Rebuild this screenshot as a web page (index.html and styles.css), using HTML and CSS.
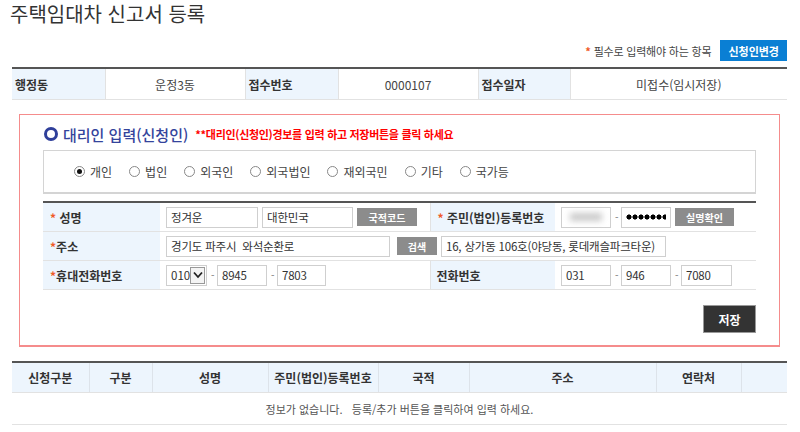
FILE: index.html
```html
<!DOCTYPE html>
<html lang="ko">
<head>
  <meta charset="UTF-8">
  <meta name="viewport" content="width=device-width, initial-scale=1.0">
  <title>주택임대차 신고서 등록</title>
  <link rel="stylesheet" href="styles.css">
</head>
<body>
  <div class="page">
    <h1 class="title">주택임대차 신고서 등록</h1>

    <div class="toolbar">
      <span class="req-note"><span class="star">*</span> 필수로 입력해야 하는 항목</span>
      <button class="blue-btn">신청인변경</button>
    </div>

    <table class="info-table">
      <colgroup>
        <col style="width:93px"><col style="width:140px">
        <col style="width:93px"><col style="width:140px">
        <col style="width:92px"><col>
      </colgroup>
      <tr>
        <th>행정동</th>
        <td>운정3동</td>
        <th>접수번호</th>
        <td>0000107</td>
        <th>접수일자</th>
        <td>미접수(임시저장)</td>
      </tr>
    </table>

    <div class="agent-box">
      <div class="agent-head">
        <span class="ring"></span>
        <span class="agent-title">대리인 입력(신청인)</span>
        <span class="agent-warn">**대리인(신청인)경보를 입력 하고 저장버튼을 클릭 하세요</span>
      </div>

      <div class="radio-box">
        <label class="radio"><span class="dot checked"></span>개인</label>
        <label class="radio"><span class="dot"></span>법인</label>
        <label class="radio"><span class="dot"></span>외국인</label>
        <label class="radio"><span class="dot"></span>외국법인</label>
        <label class="radio"><span class="dot"></span>재외국민</label>
        <label class="radio"><span class="dot"></span>기타</label>
        <label class="radio"><span class="dot"></span>국가등</label>
      </div>

      <table class="form-table">
        <colgroup>
          <col style="width:117px"><col style="width:270px">
          <col style="width:125px"><col>
        </colgroup>
        <tr>
          <th><span class="star">*</span> 성명</th>
          <td>
            <div class="fields">
              <input class="inp w92" value="정겨운">
              <input class="inp w91" value="대한민국">
              <button class="gray-btn w60">국적코드</button>
            </div>
          </td>
          <th><span class="star">*</span> 주민(법인)등록번호</th>
          <td>
            <div class="fields">
              <span class="inp w50 blurred"><span class="blur"></span></span>
              <span class="dash">-</span>
              <span class="inp w50 pw"><span class="dots"></span></span>
              <button class="gray-btn w59">실명확인</button>
            </div>
          </td>
        </tr>
        <tr>
          <th><span class="star">*</span>주소</th>
          <td colspan="3">
            <div class="fields">
              <input class="inp w224" value="경기도 파주시  와석순환로">
              <button class="gray-btn w40 ml3">검색</button>
              <input class="inp w225" value="16, 상가동 106호(야당동, 롯데캐슬파크타운)">
            </div>
          </td>
        </tr>
        <tr>
          <th><span class="star">*</span>휴대전화번호</th>
          <td>
            <div class="fields">
              <span class="select">010<span class="arrow"><svg viewBox="0 0 10 8" width="10" height="8"><path d="M1 1.5 L5 6 L9 1.5" fill="none" stroke="#222" stroke-width="1.8"/></svg></span></span>
              <span class="dash">-</span>
              <input class="inp w50" value="8945">
              <span class="dash">-</span>
              <input class="inp w49" value="7803">
            </div>
          </td>
          <th class="plain">전화번호</th>
          <td>
            <div class="fields">
              <input class="inp w50" value="031">
              <span class="dash">-</span>
              <input class="inp w50" value="946">
              <span class="dash">-</span>
              <input class="inp w51" value="7080">
            </div>
          </td>
        </tr>
      </table>

      <div class="save-row">
        <button class="dark-btn">저장</button>
      </div>
    </div>

    <table class="list-table">
      <colgroup>
        <col style="width:77px"><col style="width:63px"><col style="width:116px">
        <col style="width:110px"><col style="width:91px"><col style="width:187px">
        <col style="width:85px"><col>
      </colgroup>
      <tr>
        <th>신청구분</th>
        <th>구분</th>
        <th>성명</th>
        <th>주민(법인)등록번호</th>
        <th>국적</th>
        <th>주소</th>
        <th>연락처</th>
        <th></th>
      </tr>
      <tr>
        <td colspan="8" class="empty">정보가 없습니다.&nbsp;&nbsp; 등록/추가 버튼을 클릭하여 입력 하세요.</td>
      </tr>
    </table>
  </div>
</body>
</html>
```

FILE: styles.css
```css
body {
  margin: 0;
  background: #fff;
  color: #333;
  font-family: "Malgun Gothic", "Noto Sans CJK KR", "Noto Sans", sans-serif;
  font-size: 12px;
}
.page {
  width: 775px;
  padding: 0 13px 0 12px;
}
.title {
  margin: 0 0 0 -2px;
  font-size: 20px;
  font-weight: 400;
  line-height: 28px;
  color: #333;
}
.toolbar {
  display: flex;
  justify-content: flex-end;
  align-items: center;
  gap: 9px;
  margin-top: 12px;
}
.req-note {
  font-size: 11px;
  color: #444;
  letter-spacing: -0.2px;
}
.star {
  color: #f05a28;
  font-weight: 700;
}
.blue-btn {
  height: 21px;
  padding: 0 8px;
  border: none;
  background: #0a7fd4;
  color: #fff;
  font-family: inherit;
  font-size: 11px;
  font-weight: 700;
}
.info-table,
.form-table,
.list-table {
  width: 100%;
  border-collapse: collapse;
  table-layout: fixed;
  border-top: 2px solid #555;
}
.info-table {
  margin-top: 6px;
}
.info-table th,
.info-table td {
  height: 30px;
  padding: 0;
  border: 1px solid #e2e2e2;
  border-top: none;
  font-size: 12px;
}
.info-table tr > :first-child { border-left: none; }
.info-table tr > :last-child { border-right: none; }
.info-table th {
  background: #edf5fd;
  text-align: left;
  padding-left: 3px;
  font-weight: 700;
  color: #333;
}
.info-table td {
  text-align: center;
  color: #444;
}
.agent-box {
  margin: 14px 7px 0 7px;
  padding: 9px 23px 12px 23px;
  border: 1px solid #f58c8c;
  border-bottom-width: 2px;
}
.agent-head {
  display: flex;
  align-items: center;
  height: 20px;
}
.ring {
  width: 8px;
  height: 8px;
  border: 3px solid #2f3f9a;
  border-radius: 50%;
  margin: 0 5px 0 1px;
}
.agent-title {
  font-size: 15px;
  color: #34449c;
  font-weight: 500;
}
.agent-warn {
  margin-left: 7px;
  font-size: 11px;
  font-weight: 700;
  color: #f00;
  letter-spacing: -0.3px;
}
.radio-box {
  display: flex;
  align-items: center;
  height: 41px;
  margin-top: 6px;
  padding-left: 30px;
  border: 1px solid #d4d4d4;
  border-bottom-width: 2px;
}
.radio {
  display: flex;
  align-items: center;
  margin-right: 17px;
  font-size: 12px;
  color: #444;
}
.dot {
  box-sizing: border-box;
  width: 11px;
  height: 11px;
  margin-right: 5px;
  border: 1px solid #888;
  border-radius: 50%;
  background: #fff;
  position: relative;
}
.dot.checked::after {
  content: "";
  position: absolute;
  left: 2px;
  top: 2px;
  width: 5px;
  height: 5px;
  border-radius: 50%;
  background: #111;
}
.form-table {
  margin-top: 7px;
}
.form-table th,
.form-table td {
  height: 28px;
  padding: 0;
  border-bottom: 1px solid #e2e2e2;
}
.form-table th {
  background: #edf5fd;
  text-align: left;
  padding-left: 7px;
  font-size: 12px;
  font-weight: 700;
  color: #333;
}
.form-table th.plain {
  padding-left: 6px;
}
.form-table td {
  padding-left: 6px;
}
.form-table td + th {
  border-left: 1px solid #e2e2e2;
}
.fields {
  display: flex;
  align-items: center;
  gap: 4px;
}
.inp {
  box-sizing: border-box;
  height: 21px;
  padding: 0 4px;
  border: 1px solid #cfcfcf;
  font-family: inherit;
  font-size: 11.5px;
  letter-spacing: -0.2px;
  color: #333;
  background: #fff;
}
.w40 { width: 40px; }
.w49 { width: 49px; }
.w50 { width: 50px; }
.w51 { width: 51px; }
.w59 { width: 59px; }
.w60 { width: 60px; }
.w91 { width: 91px; }
.w92 { width: 92px; }
.w224 { width: 224px; }
.w225 { width: 225px; }
.ml3 { margin-left: 3px; }
.pw,
.blurred {
  display: flex;
  align-items: center;
  justify-content: center;
}
.dots {
  width: 42px;
  height: 6px;
  background: radial-gradient(circle, #000 2.3px, transparent 2.8px) 0 0 / 6px 6px repeat-x;
}
.blur {
  width: 32px;
  height: 8px;
  background: #c9c9c9;
  filter: blur(3px);
}
.dash {
  width: 2px;
  text-align: center;
  color: #777;
  font-size: 10px;
  align-self: flex-start;
  margin-top: 2px;
}
.gray-btn {
  height: 18px;
  padding: 0;
  border: none;
  background: #8c8c8c;
  color: #fff;
  font-family: inherit;
  font-size: 10px;
  font-weight: 700;
}
.select {
  box-sizing: border-box;
  display: flex;
  align-items: center;
  justify-content: space-between;
  width: 41px;
  height: 21px;
  padding: 0 1px 0 4px;
  border: 1px solid #cfcfcf;
  font-size: 11.5px;
  color: #333;
}
.arrow {
  box-sizing: border-box;
  display: flex;
  align-items: center;
  justify-content: center;
  width: 15px;
  height: 17px;
  border: 1px solid #999;
  background: #f4f4f4;
}
.save-row {
  display: flex;
  justify-content: flex-end;
  margin-top: 15px;
}
.dark-btn {
  width: 53px;
  height: 28px;
  border: 1px solid #999;
  background: #333;
  color: #fff;
  font-family: inherit;
  font-size: 12px;
  font-weight: 700;
}
.list-table {
  margin-top: 14px;
}
.list-table th {
  height: 29px;
  padding: 0;
  background: #edf5fd;
  border-left: 1px solid #dde3ea;
  border-bottom: 1px solid #e2e2e2;
  font-size: 12px;
  font-weight: 700;
  color: #333;
}
.list-table th:first-child {
  border-left: none;
}
.list-table td.empty {
  height: 29px;
  text-align: center;
  border-bottom: 1px solid #e2e2e2;
  font-size: 11px;
  color: #555;
}
```
